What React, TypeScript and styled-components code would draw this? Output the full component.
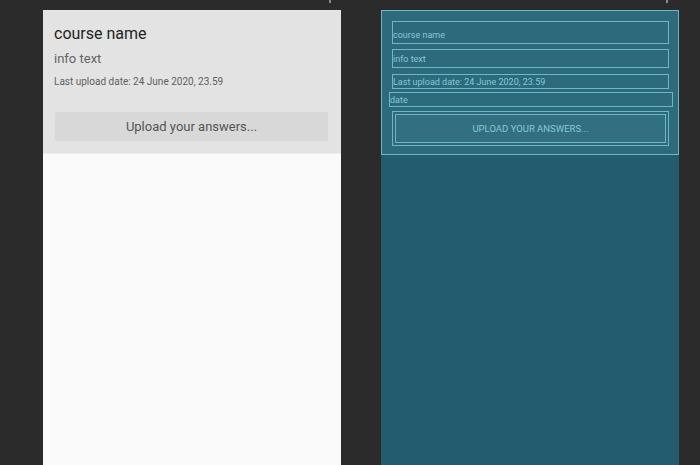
import React from 'react';
import styled, {createGlobalStyle} from 'styled-components';

const GlobalStyle = createGlobalStyle`
  html, body {
    margin: 0;
    padding: 0;
    background: #2b2b2b;
    overflow: hidden;
  }
  body {
    font-family: Roboto, "Liberation Sans", sans-serif;
  }
`;

const Canvas = styled.div`
  display: flex;
  gap: 40px;
  padding-left: 43px;
  height: 465px;
  background: #2b2b2b;
`;

const Column = styled.div`
  display: flex;
  flex-direction: column;
  width: 298px;
`;

const TopStrip = styled.div`
  display: flex;
  justify-content: flex-end;
  height: 10px;
  padding-right: ${p => p.$handle}px;
`;

const Handle = styled.div`
  width: 2px;
  height: 3px;
  background: #8a8a8a;
`;

// ---------- design view ----------

const Phone = styled.div`
  flex: 1;
  display: flex;
  flex-direction: column;
  background: #fafafa;
`;

const Card = styled.div`
  display: flex;
  flex-direction: column;
  height: 144px;
  padding-top: 10px;
  box-sizing: border-box;
  background: #e3e3e3;
  border-bottom: 1px solid #ececec;
`;

const Row = styled.div`
  display: flex;
  align-items: center;
  height: ${p => p.$h}px;
  margin: ${p => p.$m || '0 11px'};
`;

const Title = styled.span`
  font-size: 16px;
  color: #1f1f1f;
  padding-top: 3px;
`;

const Info = styled.span`
  font-size: 13px;
  color: #646464;
  padding-top: 1px;
`;

const Small = styled.span`
  font-size: 10px;
  color: #5f5f5f;
  padding-top: 1px;
`;

const UploadButton = styled.button`
  flex: 1;
  align-self: stretch;
  margin: 2px 2px 5px 1px;
  border: none;
  border-radius: 2px;
  background: #d8d8d8;
  box-shadow: 0 1px 1px rgba(0, 0, 0, 0.06);
  font-family: Roboto, "Liberation Sans", sans-serif;
  font-size: 13px;
  color: #555;
`;

// ---------- blueprint view ----------

const Blueprint = styled.div`
  flex: 1;
  display: flex;
  flex-direction: column;
  background: #225c6e;
`;

const BlueCard = styled.div`
  display: flex;
  flex-direction: column;
  height: 145px;
  padding-top: 10px;
  box-sizing: border-box;
  background: #2d6a7c;
  border: 1px solid #6db7c6;
`;

const Outline = styled.div`
  display: flex;
  align-items: center;
  height: ${p => p.$h}px;
  margin: ${p => p.$m || '0 9px 0 10px'};
  box-sizing: border-box;
  border: 1px solid #6ab8c8;
  font-size: 9px;
  color: #86c8d8;
  padding-top: ${p => p.$pt || 0}px;
`;

const InnerOutline = styled.div`
  flex: 1;
  align-self: stretch;
  display: flex;
  align-items: center;
  justify-content: center;
  margin: 2px;
  border: 1px solid #6ab8c8;
  background: #32707f;
  font-size: 9.5px;
  color: #86c8d8;
`;

export default function App() {
    return (
        <>
            <GlobalStyle/>
            <Canvas>
                <Column>
                    <TopStrip $handle={10}><Handle/></TopStrip>
                    <Phone>
                        <Card>
                            <Row $h={23}><Title>course name</Title></Row>
                            <Row $h={19} $m="5px 11px 0"><Info>info text</Info></Row>
                            <Row $h={15} $m="6px 11px 0"><Small>Last upload date: 24 June 2020, 23.59</Small></Row>
                            <Row $h={15} $m="3px 11px 0"/>
                            <Row $h={35} $m="4px 11px 0"><UploadButton>Upload your answers...</UploadButton></Row>
                        </Card>
                    </Phone>
                </Column>
                <Column>
                    <TopStrip $handle={11}><Handle/></TopStrip>
                    <Blueprint>
                        <BlueCard>
                            <Outline $h={23} $pt={4}>course name</Outline>
                            <Outline $h={19} $m="5px 9px 0 10px" $pt={1}>info text</Outline>
                            <Outline $h={15} $m="6px 9px 0 10px">Last upload date: 24 June 2020, 23.59</Outline>
                            <Outline $h={15} $m="3px 5px 0 7px">date</Outline>
                            <Outline $h={35} $m="4px 9px 0 10px">
                                <InnerOutline>UPLOAD YOUR ANSWERS...</InnerOutline>
                            </Outline>
                        </BlueCard>
                    </Blueprint>
                </Column>
            </Canvas>
        </>
    );
}
